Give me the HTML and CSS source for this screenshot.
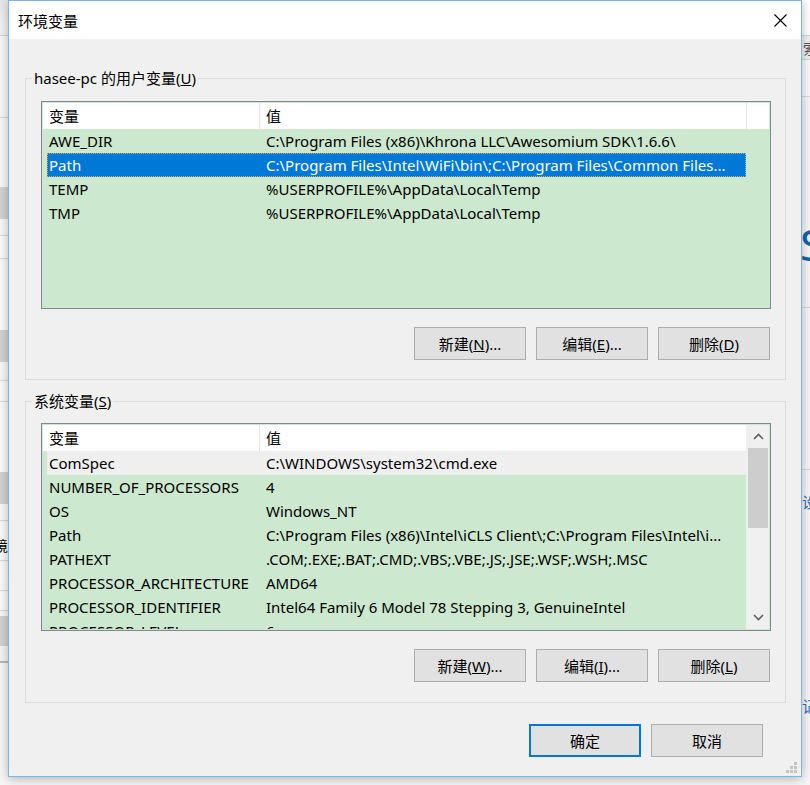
FILE: index.html
```html
<!DOCTYPE html>
<html lang="zh-CN">
<head>
  <meta charset="UTF-8" />
  <title>环境变量</title>
  <link rel="stylesheet" href="styles.css">
</head>
<body>

  <div class="bg-left">
    <div class="peek">环境</div>
  </div>

  <div class="bg-right">
    <div class="peek-search">索</div>
    <div class="peek-big">S</div>
    <div class="peek-link first">设</div>
    <div class="peek-link second">记</div>
  </div>

  <div class="dialog">
    <div class="titlebar">
      <span class="title">环境变量</span>
      <svg class="close" width="13" height="13" viewBox="0 0 13 13">
        <path d="M0.5 0.5 L12.5 12.5 M12.5 0.5 L0.5 12.5" stroke="#000" stroke-width="1.1" fill="none"/>
      </svg>
    </div>

    <div class="dialog-body">
      <fieldset class="group user-group">
        <legend>hasee-pc 的用户变量(<u>U</u>)</legend>
        <div class="listview">
          <div class="lv-header">
            <div class="hcol name">变量</div>
            <div class="hcol value">值</div>
            <div class="hcol rest"></div>
          </div>
          <div class="row"><span class="c1">AWE_DIR</span><span class="c2">C:\Program Files (x86)\Khrona LLC\Awesomium SDK\1.6.6\</span></div>
          <div class="row selected"><span class="c1">Path</span><span class="c2">C:\Program Files\Intel\WiFi\bin\;C:\Program Files\Common Files...</span></div>
          <div class="row"><span class="c1">TEMP</span><span class="c2">%USERPROFILE%\AppData\Local\Temp</span></div>
          <div class="row"><span class="c1">TMP</span><span class="c2">%USERPROFILE%\AppData\Local\Temp</span></div>
        </div>
        <div class="btn-row">
          <button class="btn">新建(<u>N</u>)...</button>
          <button class="btn">编辑(<u>E</u>)...</button>
          <button class="btn">删除(<u>D</u>)</button>
        </div>
      </fieldset>

      <fieldset class="group sys-group">
        <legend>系统变量(<u>S</u>)</legend>
        <div class="listview scrolled">
          <div class="lv-main">
            <div class="lv-header">
              <div class="hcol name">变量</div>
              <div class="hcol value">值</div>
            </div>
            <div class="row inactive"><span class="c1">ComSpec</span><span class="c2">C:\WINDOWS\system32\cmd.exe</span></div>
            <div class="row"><span class="c1">NUMBER_OF_PROCESSORS</span><span class="c2">4</span></div>
            <div class="row"><span class="c1">OS</span><span class="c2">Windows_NT</span></div>
            <div class="row"><span class="c1">Path</span><span class="c2">C:\Program Files (x86)\Intel\iCLS Client\;C:\Program Files\Intel\i...</span></div>
            <div class="row"><span class="c1">PATHEXT</span><span class="c2">.COM;.EXE;.BAT;.CMD;.VBS;.VBE;.JS;.JSE;.WSF;.WSH;.MSC</span></div>
            <div class="row"><span class="c1">PROCESSOR_ARCHITECTURE</span><span class="c2">AMD64</span></div>
            <div class="row"><span class="c1">PROCESSOR_IDENTIFIER</span><span class="c2">Intel64 Family 6 Model 78 Stepping 3, GenuineIntel</span></div>
            <div class="row"><span class="c1">PROCESSOR_LEVEL</span><span class="c2">6</span></div>
          </div>
          <div class="scrollbar">
            <div class="arrow">
              <svg width="11" height="7" viewBox="0 0 11 7"><path d="M1 6 L5.5 1.5 L10 6" stroke="#606060" stroke-width="1.6" fill="none"/></svg>
            </div>
            <div class="thumb"></div>
            <div class="track"></div>
            <div class="arrow">
              <svg width="11" height="7" viewBox="0 0 11 7"><path d="M1 1 L5.5 5.5 L10 1" stroke="#606060" stroke-width="1.6" fill="none"/></svg>
            </div>
          </div>
        </div>
        <div class="btn-row">
          <button class="btn">新建(<u>W</u>)...</button>
          <button class="btn">编辑(<u>I</u>)...</button>
          <button class="btn">删除(<u>L</u>)</button>
        </div>
      </fieldset>

      <div class="footer">
        <button class="btn default">确定</button>
        <button class="btn">取消</button>
      </div>
    </div>

    <svg class="grip" width="12" height="12" viewBox="0 0 12 12">
      <rect x="8" y="0" width="3" height="3" fill="#c4c4c4"/>
      <rect x="4" y="4" width="3" height="3" fill="#c4c4c4"/>
      <rect x="8" y="4" width="3" height="3" fill="#c4c4c4"/>
      <rect x="0" y="8" width="3" height="3" fill="#c4c4c4"/>
      <rect x="4" y="8" width="3" height="3" fill="#c4c4c4"/>
      <rect x="8" y="8" width="3" height="3" fill="#c4c4c4"/>
    </svg>
  </div>

</body>
</html>
```

FILE: styles.css
```css
* {
  box-sizing: border-box;
}
body {
  margin: 0;
  width: 810px;
  height: 785px;
  overflow: hidden;
  position: relative;
  background-color: #f7f7f7;
  font-family: "Noto Sans", "Noto Sans CJK SC", sans-serif;
  font-size: 15px;
  color: #000;
}

/* windows behind the dialog */
.bg-left {
  position: absolute;
  left: 0;
  top: 0;
  width: 8px;
  height: 663px;
  overflow: hidden;
  background: linear-gradient(to bottom,
    #e6e6e6 0, #f2f2f2 20px, #f2f2f2 35px, #d2d2d2 35px, #d2d2d2 36px,
    #f8f8f8 36px, #f8f8f8 117px, #d8d8d8 117px, #d8d8d8 118px,
    #f8f8f8 118px, #f8f8f8 187px, #d3d3d3 187px, #d3d3d3 219px,
    #f8f8f8 219px, #f8f8f8 235px, #dadada 235px, #dadada 236px,
    #fbfbfb 236px, #fbfbfb 258px, #dadada 258px, #dadada 259px,
    #fbfbfb 259px, #fbfbfb 330px, #d3d3d3 330px, #d3d3d3 362px,
    #f8f8f8 362px, #f8f8f8 380px, #dadada 380px, #dadada 381px,
    #fbfbfb 381px, #fbfbfb 401px, #dadada 401px, #dadada 402px,
    #fbfbfb 402px, #fbfbfb 472px, #d3d3d3 472px, #d3d3d3 504px,
    #f8f8f8 504px, #f8f8f8 520px, #dadada 520px, #dadada 521px,
    #fbfbfb 521px, #fbfbfb 560px, #dadada 560px, #dadada 561px,
    #fbfbfb 561px, #fbfbfb 590px, #dadada 590px, #dadada 591px,
    #fbfbfb 591px, #fbfbfb 610px, #dadada 610px, #dadada 611px,
    #f8f8f8 611px, #f8f8f8 616px, #d3d3d3 616px, #d3d3d3 646px,
    #f4f4f4 646px, #f4f4f4 661px, #b8b8b8 661px);
}
.bg-left .peek {
  margin-top: 537px;
  display: flex;
  justify-content: flex-end;
  white-space: nowrap;
  line-height: 18px;
  font-size: 14px;
}
.bg-right {
  position: absolute;
  left: 802px;
  top: 0;
  width: 8px;
  height: 785px;
  overflow: hidden;
  background: linear-gradient(to bottom,
    #ffffff 0, #ffffff 35px, #cfcfcf 35px, #cfcfcf 36px,
    #f0f0f0 36px, #f0f0f0 59px, #d6d6d6 59px, #d6d6d6 60px,
    #fafafa 60px, #fafafa 96px, #dadada 96px, #dadada 97px,
    #f6f6f6 97px, #f6f6f6 307px, #d6d6d6 307px, #d6d6d6 308px,
    #f6f6f6 308px, #f6f6f6 469px, #d6d6d6 469px, #d6d6d6 470px,
    #f6f6f6 470px);
  white-space: nowrap;
}
.peek-search {
  margin-top: 39px;
  margin-left: 1px;
  color: #555;
  font-size: 15px;
  line-height: 18px;
}
.peek-big {
  margin-top: 157px;
  margin-left: -2px;
  color: #0a64b4;
  font-size: 44px;
  line-height: 60px;
}
.peek-link {
  color: #2a6fc9;
  font-size: 15px;
  line-height: 18px;
}
.peek-link.first {
  margin-top: 219px;
}
.peek-link.second {
  margin-top: 186px;
}

/* dialog */
.dialog {
  position: absolute;
  left: 8px;
  top: 0;
  width: 794px;
  height: 777px;
  border: 1px solid #7db4ea;
  background-color: #f0f0f0;
  box-shadow: 0 2px 10px rgba(0,0,0,0.28);
  display: flex;
  flex-direction: column;
}
.titlebar {
  height: 38px;
  flex: none;
  background-color: #fff;
  display: flex;
  align-items: center;
  justify-content: space-between;
  padding: 1px 14px 0 9px;
}
.title {
  font-size: 15px;
}
.dialog-body {
  padding: 0 15px 0 16px;
}

.group {
  margin: 0;
  border: 1px solid #dcdcdc;
  min-width: 0;
}
.group legend {
  padding: 0 2px;
  margin-left: -9px;
  line-height: 20px;
}
.user-group {
  margin-top: 29px;
  padding: 13px 14px 19px 15px;
}
.sys-group {
  margin-top: 11px;
  padding: 12px 14px 20px 15px;
}

.listview {
  height: 208px;
  border: 1px solid #828790;
  background-color: #cce8cf;
  padding: 1px;
  overflow: hidden;
}
.listview.scrolled {
  display: flex;
}
.lv-main {
  width: 703px;
  overflow: hidden;
}
.lv-header {
  display: flex;
  height: 26px;
  background-color: #fff;
  line-height: 26px;
}
.hcol {
  padding-left: 6px;
  white-space: nowrap;
}
.hcol.name {
  width: 217px;
  border-right: 1px solid #e5e5e5;
}
.hcol.value {
  width: 487px;
  border-right: 1px solid #e5e5e5;
}
.hcol.rest {
  flex: 1;
}
.scrolled .hcol.value {
  flex: 1;
  border-right: none;
}

.row {
  display: flex;
  width: 699px;
  margin-left: 4px;
  height: 24px;
  line-height: 24px;
  white-space: nowrap;
}
.row .c1 {
  width: 212px;
  padding-left: 2px;
  overflow: hidden;
}
.row .c2 {
  width: 487px;
  padding-left: 7px;
  overflow: hidden;
  text-overflow: ellipsis;
}
.row.selected {
  background-color: #0078d7;
  color: #fff;
  outline: 1px dotted #d9a25a;
  outline-offset: -1px;
}
.row.inactive {
  background-color: #efefef;
}

.scrollbar {
  width: 23px;
  background-color: #f0f0f0;
  display: flex;
  flex-direction: column;
  padding: 0 1px 0 2px;
}
.scrollbar .arrow {
  height: 23px;
  display: flex;
  align-items: center;
  justify-content: center;
}
.scrollbar .thumb {
  height: 80px;
  background-color: #cdcdcd;
}
.scrollbar .track {
  flex: 1;
}

.btn-row {
  display: flex;
  justify-content: flex-end;
  gap: 10px;
  margin-top: 18px;
  margin-right: 1px;
}
.btn {
  width: 112px;
  height: 33px;
  padding: 0;
  margin: 0;
  background-color: #e1e1e1;
  border: 1px solid #adadad;
  border-radius: 0;
  font-family: inherit;
  font-size: 15px;
  color: #000;
}
.btn.default {
  border: 2px solid #0078d7;
}

.footer {
  display: flex;
  justify-content: flex-end;
  gap: 10px;
  margin-top: 21px;
  margin-right: 23px;
}

.grip {
  position: absolute;
  right: 3px;
  bottom: 2px;
}
```
